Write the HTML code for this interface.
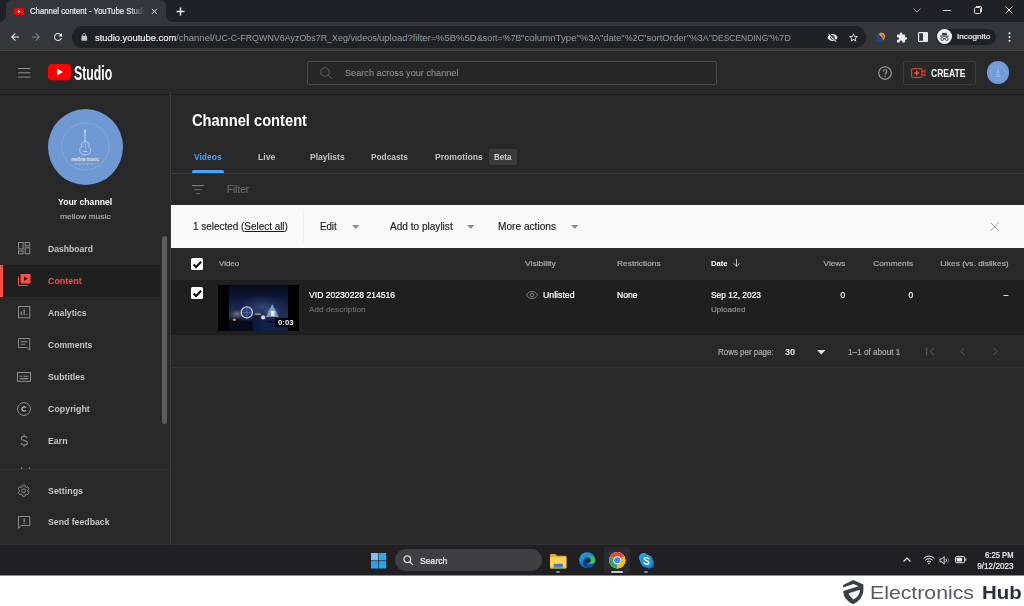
<!DOCTYPE html>
<html>
<head>
<meta charset="utf-8">
<title>Channel content - YouTube Studio</title>
<style>
*{box-sizing:border-box;margin:0;padding:0}
html,body{width:1024px;height:606px;overflow:hidden;background:#fff;font-family:"Liberation Sans",sans-serif;}
#root{position:relative;width:1024px;height:606px;overflow:hidden;background:#fff}
.a{position:absolute}
.t{position:absolute;white-space:nowrap;line-height:1;display:inline-block}
svg{position:absolute;overflow:visible}
/* chrome */
#tabstrip{left:0;top:0;width:1024px;height:23px;background:#202124}
#tab{left:6px;top:0;width:160px;height:23px;background:#35363a;border-radius:6px 6px 0 0}
#tabl{left:0px;top:16px;width:6px;height:6px;background:radial-gradient(circle at 0 0,#202124 5.5px,#35363a 6px)}
#tabr{left:166px;top:16px;width:6px;height:6px;background:radial-gradient(circle at 100% 0,#202124 5.5px,#35363a 6px)}
#toolbar{left:0;top:22px;width:1024px;height:29px;background:#35363a;border-bottom:1px solid #404145}
#omni{left:72px;top:26px;width:794px;height:22px;border-radius:11px;background:#202124}
#incog{left:936px;top:28.5px;width:60px;height:16px;border-radius:8px;background:#202124}
#incogc{left:936.5px;top:29px;width:15px;height:15px;border-radius:50%;background:#f1f3f4}
/* studio */
#app{left:0;top:51px;width:1024px;height:494px;background:#282828}
#hdr{left:0;top:51px;width:1024px;height:43px;background:#282828;box-shadow:0 1px 1px rgba(0,0,0,.28)}
#sideline{left:170px;top:93px;width:1px;height:452px;background:#3a3a3c;z-index:2}
#search{left:307px;top:60.5px;width:410px;height:24px;border:1px solid #4b4b4b;border-radius:2px;background:#262626}
#create{left:903px;top:60.7px;width:72.8px;height:24px;border:1px solid #3b3b3b;border-radius:2px}
#avatar{left:986.6px;top:61.4px;width:22px;height:22.2px;border-radius:50%;background:#719cd6}
#bigav{left:48px;top:108.8px;width:75.2px;height:76px;border-radius:50%;background:#6f99d3}
#navsel{left:0;top:264.5px;width:160px;height:32px;background:#1f1f1f}
#navbar{left:0;top:264.5px;width:3px;height:32px;background:#ff4e45}
#sscroll{left:162.2px;top:235.6px;width:5.2px;height:188px;border-radius:3px;background:#5c5c5c}
#sdiv{left:0;top:469px;width:170px;height:1px;background:#333}
#tabline{left:171px;top:173px;width:853px;height:1px;background:#3a3a3a}
#tabul{left:192px;top:170px;width:32px;height:2.5px;background:#3ea6ff;border-radius:2px 2px 0 0}
#beta{left:489px;top:149px;width:27.8px;height:15.8px;background:#3a3a3a;border-radius:2px}
#selbar{left:171px;top:205.2px;width:853px;height:42.4px;background:#f9f9f9}
#seldiv{left:303px;top:211px;width:1px;height:32px;background:#efefef}
#row{left:171px;top:280px;width:853px;height:55px;background:#1f1f1f}
#hline{left:171px;top:280px;width:853px;height:1px;background:#222}
#pline{left:171px;top:367px;width:853px;height:1px;background:#343434}
.cb{width:12.3px;height:12.1px;background:#fff;border-radius:1.5px}
#thumb{left:218.4px;top:284.9px;width:80.3px;height:46.1px;background:#000;overflow:hidden}
#dur{left:275.4px;top:318px;width:19px;height:8.8px;background:rgba(0,0,0,.85);border-radius:1px}
/* taskbar */
#taskbar{left:0;top:544.3px;width:1024px;height:31.2px;background:#202023;border-top:1px solid #303034}
#tsearch{left:395.2px;top:549px;width:147.2px;height:22px;border-radius:11px;background:#3f3f42}
#tchrome{left:603.5px;top:546.5px;width:26.5px;height:26.5px;border-radius:3px;background:#2b2b2f}
.dot{height:1.6px;border-radius:1px;background:#8a8a8e}
#tbot{left:0;top:575px;width:1024px;height:1px;background:#8c8c8e}

</style>
</head>
<body>
<div id="root">
<!-- ===== Chrome browser frame ===== -->
<div class="a" id="tabstrip"></div>
<div class="a" id="tab"></div>
<div class="a" id="tabl"></div>
<div class="a" id="tabr"></div>
<div class="a" id="toolbar"></div>
<div class="a" id="omni"></div>
<!-- favicon -->
<svg style="left:14px;top:8px" width="10" height="7" viewBox="0 0 10 7"><rect width="10" height="7" rx="1.8" fill="#f00"/><path d="M4 2v3l2.6-1.5z" fill="#fff"/></svg>
<!-- tab close -->
<svg style="left:151px;top:7.800px" width="6.800" height="6.800" viewBox="0 0 8 8"><path d="M1 1l6 6M7 1l-6 6" stroke="#e8eaed" stroke-width="1.1" fill="none"/></svg>
<!-- new tab + -->
<svg style="left:175.5px;top:6.5px" width="9" height="9" viewBox="0 0 9 9"><path d="M4.5 .5v8M.5 4.5h8" stroke="#e8eaed" stroke-width="1.5" fill="none"/></svg>
<!-- window controls -->
<svg style="left:913px;top:7.5px" width="8" height="5" viewBox="0 0 8 5"><path d="M.5 .5l3.5 3.5 3.5-3.5" stroke="#9aa0a6" stroke-width="1" fill="none"/></svg>
<svg style="left:943px;top:9.5px" width="8" height="1" viewBox="0 0 8 1"><rect width="8" height="1" fill="#dadce0"/></svg>
<svg style="left:974px;top:6px" width="8" height="8" viewBox="0 0 8 8"><rect x=".5" y="1.5" width="6" height="6" rx="1.2" stroke="#dadce0" stroke-width="1" fill="none"/><path d="M2 .5h4.2a1.3 1.3 0 0 1 1.3 1.3V6" stroke="#dadce0" stroke-width="1" fill="none"/></svg>
<svg style="left:1005px;top:6px" width="8" height="8" viewBox="0 0 8 8"><path d="M.5 .5l7 7M7.5 .5l-7 7" stroke="#e8eaed" stroke-width="1" fill="none"/></svg>
<!-- nav buttons -->
<svg style="left:8.5px;top:30.5px" width="12" height="12" viewBox="0 0 24 24"><path fill="#e8eaed" d="M20 11H7.83l5.59-5.59L12 4l-8 8 8 8 1.41-1.41L7.83 13H20v-2z"/></svg>
<svg style="left:30px;top:30.5px" width="12" height="12" viewBox="0 0 24 24"><path fill="#7f8286" d="M12 4l-1.41 1.41L16.17 11H4v2h12.17l-5.58 5.59L12 20l8-8z"/></svg>
<svg style="left:51.5px;top:30.5px" width="12" height="12" viewBox="0 0 24 24"><path fill="#e8eaed" d="M17.65 6.35C16.2 4.9 14.21 4 12 4c-4.42 0-7.99 3.58-7.99 8s3.57 8 7.99 8c3.73 0 6.84-2.55 7.73-6h-2.08c-.82 2.33-3.04 4-5.65 4-3.31 0-6-2.69-6-6s2.69-6 6-6c1.66 0 3.14.69 4.22 1.78L13 11h7V4l-2.35 2.35z"/></svg>
<!-- lock -->
<svg style="left:80px;top:32.5px" width="8.5" height="8.5" viewBox="0 0 24 24"><path fill="#c4c7c9" d="M18 8h-1V6c0-2.76-2.24-5-5-5S7 3.24 7 6v2H6c-1.1 0-2 .9-2 2v10c0 1.1.9 2 2 2h12c1.1 0 2-.9 2-2V10c0-1.1-.9-2-2-2zm-2.9 0H8.900V6c0-1.710 1.390-3.100 3.100-3.100 1.710 0 3.100 1.390 3.100 3.100v2z"/></svg>
<!-- eye-slash -->
<svg style="left:826.5px;top:31.5px" width="11" height="11" viewBox="0 0 24 24"><path fill="#e8eaed" d="M12 7c2.76 0 5 2.24 5 5 0 .65-.13 1.26-.36 1.83l2.92 2.92c1.51-1.26 2.7-2.89 3.43-4.75-1.73-4.39-6-7.5-11-7.5-1.4 0-2.74.25-3.98.7l2.16 2.16C10.74 7.13 11.35 7 12 7zM2 4.27l2.28 2.28.46.46C3.080 8.300 1.780 10.020 1 12c1.730 4.390 6 7.500 11 7.500 1.550 0 3.030-.3 4.380-.84l.42.42L19.730 22 21 20.730 3.270 3 2 4.270zM7.530 9.800l1.550 1.550c-.05.21-.08.43-.08.65 0 1.660 1.340 3 3 3 .22 0 .44-.03.65-.08l1.550 1.550c-.67.33-1.410.53-2.200.53-2.760 0-5-2.240-5-5 0-.79.2-1.530.53-2.200zm4.310-.78l3.150 3.150.02-.16c0-1.660-1.340-3-3-3l-.17.010z"/></svg>
<!-- star -->
<svg style="left:847.5px;top:31.5px" width="11" height="11" viewBox="0 0 24 24"><path fill="#e8eaed" d="M22 9.240l-7.190-.62L12 2 9.190 8.630 2 9.240l5.460 4.730L5.820 21 12 17.270 18.180 21l-1.630-7.030L22 9.240zM12 15.400l-3.760 2.270 1-4.280-3.320-2.880 4.380-.38L12 6.100l1.710 4.040 4.380.38-3.320 2.880 1 4.280L12 15.400z"/></svg>
<!-- extension colored -->
<svg style="left:875px;top:32px" width="11" height="10" viewBox="0 0 11 10"><ellipse cx="4.200" cy="5.200" rx="3.800" ry="4.300" fill="#27407a"/><path d="M4.500 1.200c2.200-1.200 5.300.2 5.600 2.600.2 1.800-.8 3.600-2.200 4.600-.3-1.200-.2-2.300-1-3.300-.7-.9-1.800-1.200-2.500-2.100-.3-.5-.3-1.300.1-1.800z" fill="#e8a33a"/><path d="M6.200 2.200c1.200-.2 2.500.5 2.700 1.700.2 1-.3 2-.9 2.700-.1-1.700-.9-3.100-1.800-4.400z" fill="#d8402f"/></svg>
<!-- puzzle -->
<svg style="left:895.5px;top:31.5px" width="11.500" height="11.500" viewBox="0 0 24 24"><path fill="#e8eaed" d="M20.500 11H19V7c0-1.100-.9-2-2-2h-4V3.500C13 2.120 11.880 1 10.500 1S8 2.120 8 3.500V5H4c-1.100 0-1.990.9-1.990 2v3.800H3.500c1.490 0 2.700 1.210 2.700 2.700s-1.210 2.700-2.700 2.700H2V20c0 1.100.9 2 2 2h3.800v-1.500c0-1.490 1.210-2.700 2.700-2.700 1.490 0 2.700 1.210 2.700 2.700V22H17c1.100 0 2-.9 2-2v-4h1.500c1.380 0 2.500-1.120 2.500-2.500S21.880 11 20.500 11z"/></svg>
<!-- side panel -->
<svg style="left:918px;top:32px" width="10" height="10" viewBox="0 0 10 10"><rect x=".6" y=".6" width="8.800" height="8.800" rx=".6" stroke="#e8eaed" stroke-width="1.200" fill="none"/><rect x="5" y=".6" width="4.400" height="8.800" fill="#e8eaed"/></svg>
<!-- incognito pill -->
<div class="a" id="incog"></div>
<div class="a" id="incogc"></div>
<svg style="left:938.5px;top:31.5px" width="11" height="10" viewBox="0 0 11 10"><path d="M2.600 3.600l.8-2.600c.1-.3.4-.4.700-.3l1.400.4 1.400-.4c.3-.1.600 0 .7.300l.8 2.600z" fill="#3c4043"/><rect x=".8" y="3.700" width="9.400" height=".9" fill="#3c4043"/><circle cx="3.300" cy="7" r="1.500" stroke="#3c4043" stroke-width=".9" fill="none"/><circle cx="7.700" cy="7" r="1.500" stroke="#3c4043" stroke-width=".9" fill="none"/><path d="M4.700 6.800c.5-.3 1.100-.3 1.600 0" stroke="#3c4043" stroke-width=".8" fill="none"/></svg>
<!-- 3 dots -->
<svg style="left:1008px;top:32px" width="3" height="10" viewBox="0 0 3 10"><circle cx="1.500" cy="1.300" r="1.050" fill="#e8eaed"/><circle cx="1.500" cy="5" r="1.050" fill="#e8eaed"/><circle cx="1.500" cy="8.700" r="1.050" fill="#e8eaed"/></svg>

<!-- ===== YouTube Studio ===== -->
<div class="a" id="app"></div>
<div class="a" id="sideline"></div>
<div class="a" id="hdr"></div>
<!-- hamburger -->
<svg style="left:18px;top:67.500px" width="12.500" height="10" viewBox="0 0 12.500 10"><path d="M0 .5h12.500M0 4.800h12.500M0 9.100h12.500" stroke="#909090" stroke-width="1" fill="none"/></svg>
<!-- yt logo -->
<svg style="left:48px;top:64.300px" width="23" height="16.200" viewBox="0 0 23 16.200"><rect width="23" height="16.200" rx="4" fill="#f00"/><path d="M9 4.600v7l6.200-3.500z" fill="#fff"/></svg>
<!-- search box -->
<div class="a" id="search"></div>
<svg style="left:319.500px;top:66.800px" width="13" height="13" viewBox="0 0 13 13"><circle cx="5" cy="5" r="4.300" stroke="#5f5f5f" stroke-width="1" fill="none"/><path d="M8.100 8.100l4 4" stroke="#5f5f5f" stroke-width="1" fill="none"/></svg>
<!-- help -->
<svg style="left:878px;top:66px" width="14" height="14" viewBox="0 0 14 14"><circle cx="7" cy="7" r="6.300" stroke="#a0a0a0" stroke-width="1.150" fill="none"/><path d="M5.100 5.600c0-1.100.8-1.900 1.900-1.900s1.900.7 1.900 1.700c0 1.300-1.800 1.500-1.800 3" stroke="#a0a0a0" stroke-width="1.150" fill="none"/><circle cx="7.050" cy="10.200" r=".75" fill="#a0a0a0"/></svg>
<!-- create -->
<div class="a" id="create"></div>
<svg style="left:911px;top:68px" width="15" height="10" viewBox="0 0 15 10"><rect x=".6" y=".6" width="10.300" height="8.800" rx="1.200" stroke="#c9433a" stroke-width="1.200" fill="none"/><path d="M11 3.800l2.900-1.400v5.200L11 6.200" stroke="#c9433a" stroke-width="1.100" fill="none"/><path d="M5.750 2.600v4.800M3.300 5h4.900" stroke="#ff4e45" stroke-width="1.400" fill="none"/></svg>
<!-- avatar small -->
<div class="a" id="avatar"></div>
<svg style="left:986.500px;top:61.500px" width="22" height="22" viewBox="0 0 22 22"><circle cx="11" cy="11" r="7" stroke="#94b6e6" stroke-width=".8" fill="none" stroke-dasharray=".9 .6"/><path d="M11 6.300v3.800" stroke="#b5cdef" stroke-width=".7"/><ellipse cx="11" cy="11.600" rx="1.400" ry="1.800" stroke="#b0c9ee" stroke-width=".6" fill="none"/><rect x="8" y="14.300" width="6" height=".7" fill="#a8c4ec"/></svg>

<!-- sidebar avatar -->
<div class="a" id="bigav"></div>
<svg style="left:48px;top:109px" width="75" height="75" viewBox="0 0 75 75">
<circle cx="37.400" cy="37.400" r="23.500" stroke="#9dbbe6" stroke-width="1" fill="none" stroke-dasharray="1 .6" opacity=".8"/>
<path d="M37 21.500v11.500" stroke="#c4d7f2" stroke-width="1" fill="none"/>
<path d="M36.200 20.800h1.700v2.400h-1.700z" fill="#d9e5f7"/>
<path d="M34.600 33.200C33 34 33.200 36.500 34.300 37.600 31.500 38.500 31 42 32.500 44c1.800 2.300 7.600 2.300 9.400 0 1.500-2 1-5.500-1.800-6.400 1.100-1.100 1.300-3.600-.3-4.400-1.300-.7-3.900-.7-5.200 0z" stroke="#bdd2f0" stroke-width=".9" fill="none"/>
<path d="M35.800 35c1.300-.8 2.300.5 1.600 1.900-.5 1-.2 2.300.9 2.800" stroke="#bdd2f0" stroke-width=".7" fill="none"/>
<rect x="35" y="42.200" width="4.400" height=".9" fill="#c9daf3"/>
<text x="37.100" y="52" font-family="Liberation Sans, sans-serif" font-size="4.500" font-weight="700" fill="#e9e6d6" text-anchor="middle" textLength="27.500" lengthAdjust="spacingAndGlyphs">mellow music</text>
<text x="37" y="55.800" font-family="Liberation Sans, sans-serif" font-size="2.600" fill="#a9c3ea" text-anchor="middle" textLength="21" lengthAdjust="spacingAndGlyphs">easy on the ears</text>
</svg>

<!-- nav selected -->
<div class="a" id="navsel"></div>
<div class="a" id="navbar"></div>
<div class="a" id="sscroll"></div>
<div class="a" id="sdiv"></div>

<!-- nav icons (12x12 at x=18) -->
<!-- dashboard -->
<svg style="left:17.700px;top:241.900px" width="12.300" height="12.300" viewBox="0 0 12.500 12.500" fill="none" stroke="#909090" stroke-width="1"><rect x=".5" y=".5" width="4.700" height="6.600"/><rect x="7.300" y=".5" width="4.700" height="3.400"/><rect x=".5" y="9.100" width="4.700" height="2.900"/><rect x="7.300" y="5.900" width="4.700" height="6.100"/></svg>
<!-- content (red) -->
<svg style="left:17.500px;top:274.400px" width="12.500" height="12" viewBox="0 0 13 12.500"><path d="M.5 2.600v9.400h9.600" stroke="#ff4e45" stroke-width="1" fill="none"/><rect x="2.600" y="0" width="10.400" height="9.800" rx=".6" fill="#ff4e45"/><path d="M6.300 2.500v4.800l4-2.400z" fill="#1f1f1f"/></svg>
<!-- analytics -->
<svg style="left:17.700px;top:305.900px" width="12.300" height="12.300" viewBox="0 0 12.500 12.500" fill="none" stroke="#909090" stroke-width="1"><rect x=".5" y=".5" width="11.500" height="11.500"/><path d="M3.500 5.600v3.600M6.250 3.300v5.900M9 8.200v1" stroke-width="1.300"/></svg>
<!-- comments -->
<svg style="left:17.700px;top:337.900px" width="12.300" height="12.800" viewBox="0 0 12.500 13" fill="none" stroke="#909090" stroke-width="1"><path d="M.5 .5h11.500v12l-2.600-2.800H.5z"/><path d="M2.800 3.700h6.800M2.800 6.300h4.600"/></svg>
<!-- subtitles -->
<svg style="left:17px;top:372.300px" width="14" height="9.800" viewBox="0 0 14 9.800" fill="none" stroke="#909090" stroke-width="1"><rect x=".5" y=".5" width="13" height="8.800"/><path d="M2.800 4.300h2.200M6.200 4.300h5M2.800 6.600h8.400" stroke-width="1.100"/></svg>
<!-- copyright -->
<svg style="left:17px;top:401.800px" width="14" height="14" viewBox="0 0 14 14" fill="none" stroke="#909090" stroke-width="1"><circle cx="7" cy="7" r="6.450"/><path d="M8.700 5.700a2.100 2.100 0 1 0 0 2.600" stroke="#b8b8b8" stroke-width="1.300"/></svg>
<!-- earn -->
<svg style="left:20.200px;top:433.800px" width="8.200" height="13.400" viewBox="0 0 9 14" fill="none" stroke="#909090" stroke-width="1.100"><path d="M7.800 4.100c-.2-1.100-1.400-1.900-3.200-1.900-1.900 0-3.200.9-3.200 2.300 0 3.200 6.800 1.300 6.800 4.700 0 1.400-1.400 2.400-3.500 2.400-2 0-3.400-.9-3.600-2.200"/><path d="M4.500 0v2.200M4.500 11.700v2.300"/></svg>
<!-- customization (clipped) -->
<svg style="left:20.500px;top:467px" width="10" height="2" viewBox="0 0 10 2"><rect x="0" y=".4" width="1.300" height="1.600" fill="#8a8a8a"/><rect x="7.800" y=".4" width="1.300" height="1.600" fill="#8a8a8a"/></svg>
<!-- settings gear -->
<svg style="left:17.300px;top:483.700px" width="13.400" height="13.400" viewBox="0 0 24 24" fill="none" stroke="#909090" stroke-width="1.700"><path d="M19.430 12.980c.04-.32.07-.64.07-.98s-.03-.66-.07-.98l2.110-1.650c.19-.15.24-.42.12-.64l-2-3.460c-.12-.22-.39-.3-.61-.22l-2.490 1c-.52-.4-1.080-.73-1.690-.98l-.38-2.650C14.460 2.180 14.250 2 14 2h-4c-.25 0-.46.18-.49.42l-.38 2.650c-.61.25-1.170.59-1.690.98l-2.490-1c-.23-.09-.49 0-.61.22l-2 3.460c-.13.22-.07.49.12.640l2.110 1.650c-.04.32-.07.65-.07.980s.03.660.07.980l-2.110 1.650c-.19.15-.24.42-.12.640l2 3.460c.12.22.39.3.61.22l2.490-1c.52.4 1.080.73 1.690.98l.38 2.650c.03.24.24.42.49.42h4c.25 0 .46-.18.490-.42l.38-2.650c.61-.25 1.170-.59 1.690-.98l2.490 1c.23.09.49 0 .61-.22l2-3.460c.12-.22.07-.49-.12-.64l-2.110-1.650z"/><circle cx="12" cy="12" r="3.400"/></svg>
<!-- feedback -->
<svg style="left:17.700px;top:515.700px" width="12.300" height="12.800" viewBox="0 0 12.500 13" fill="none" stroke="#909090" stroke-width="1"><path d="M12 .5H.5v12l2.600-2.800H12z"/><path d="M6.250 2.500v3.800M6.250 7.300v1.200" stroke-width="1.300"/></svg>

<!-- ===== main content ===== -->
<div class="a" id="tabline"></div>
<div class="a" id="tabul"></div>
<div class="a" id="beta"></div>
<!-- filter icon -->
<svg style="left:191.500px;top:184.500px" width="12" height="9" viewBox="0 0 12 9"><path d="M0 .6h12" stroke="#757575" stroke-width="1.300" fill="none"/><path d="M2.200 4.700h7.600M4.300 8.600h3.400" stroke="#717171" stroke-width="1" fill="none"/></svg>
<!-- selection bar -->
<div class="a" id="selbar"></div>
<div class="a" id="seldiv"></div>
<svg style="left:351.500px;top:224.500px" width="7.500" height="4" viewBox="0 0 7.500 4"><path d="M0 0h7.500L3.750 4z" fill="#8e8e8e"/></svg>
<svg style="left:467.300px;top:224.500px" width="7.500" height="4" viewBox="0 0 7.500 4"><path d="M0 0h7.500L3.750 4z" fill="#8e8e8e"/></svg>
<svg style="left:571.200px;top:224.500px" width="7.500" height="4" viewBox="0 0 7.500 4"><path d="M0 0h7.500L3.750 4z" fill="#8e8e8e"/></svg>
<svg style="left:990px;top:222px" width="9.500" height="9.500" viewBox="0 0 9.500 9.500"><path d="M.5 .5l8.500 8.500M9 .5L.5 9" stroke="#9c9c9c" stroke-width="1" fill="none"/></svg>
<!-- table -->
<div class="a" id="row"></div>
<div class="a" id="pline"></div>
<div class="a cb" style="left:191px;top:257.700px"></div>
<svg style="left:191px;top:257.700px" width="12.500" height="12.500" viewBox="0 0 12.500 12.500"><path d="M2.600 6.500l2.500 2.500 5-5.300" stroke="#0a0a0a" stroke-width="2" fill="none"/></svg>
<div class="a cb" style="left:191px;top:287px"></div>
<svg style="left:191px;top:287px" width="12.500" height="12.500" viewBox="0 0 12.500 12.500"><path d="M2.600 6.500l2.500 2.500 5-5.300" stroke="#0a0a0a" stroke-width="2" fill="none"/></svg>
<!-- thumbnail -->
<div class="a" id="thumb">
<svg style="left:10.800px;top:0" width="59" height="46" viewBox="0 0 59 46">
<defs>
<linearGradient id="sky" x1="0" y1="0" x2="0" y2="1"><stop offset="0" stop-color="#070b1d"/><stop offset=".25" stop-color="#0c1534"/><stop offset=".5" stop-color="#18274e"/><stop offset=".68" stop-color="#22335a"/><stop offset=".8" stop-color="#0d1630"/><stop offset="1" stop-color="#070b1a"/></linearGradient>
<radialGradient id="gl1" cx=".5" cy=".5" r=".5"><stop offset="0" stop-color="#dfe8fb" stop-opacity=".95"/><stop offset=".5" stop-color="#8fa6d6" stop-opacity=".5"/><stop offset="1" stop-color="#3a5aa0" stop-opacity="0"/></radialGradient>
<radialGradient id="gl2" cx=".5" cy=".5" r=".5"><stop offset="0" stop-color="#3a5288" stop-opacity=".8"/><stop offset="1" stop-color="#1a2b55" stop-opacity="0"/></radialGradient>
<radialGradient id="sm" cx=".5" cy=".5" r=".5"><stop offset="0" stop-color="#8a8c90" stop-opacity=".8"/><stop offset="1" stop-color="#55585e" stop-opacity="0"/></radialGradient>
</defs>
<rect width="59" height="46" fill="url(#sky)"/>
<ellipse cx="33" cy="22" rx="26" ry="13" fill="url(#gl2)"/>
<ellipse cx="8" cy="29" rx="8" ry="5" fill="url(#sm)"/>
<ellipse cx="43" cy="27" rx="9" ry="6" fill="url(#gl1)" opacity=".55"/>
<circle cx="17.800" cy="27.400" r="5.600" stroke="#c9ccd2" stroke-width="1.300" fill="#2a4b8c" fill-opacity=".55"/>
<path d="M17.800 22v10.800M12.400 27.400h10.800" stroke="#7fa0d8" stroke-width=".6" opacity=".7"/>
<rect x="26" y="28.400" width="6" height="1.300" fill="#c69a5c"/>
<path d="M37 32l4.500-9.500 1.800-3 1.500 3L50 32z" fill="#9fb0cf" opacity=".75"/>
<path d="M42 22.500l1.300-3.200 1.400 3.200" fill="#6da8ff"/>
<rect x="42" y="26" width="3.500" height="5" fill="#eef2fb" opacity=".9"/>
<circle cx="34.200" cy="32.400" r="1.900" fill="#fff" opacity=".95"/>
<circle cx="34.200" cy="32.400" r="3.600" fill="url(#gl1)" opacity=".6"/>
<path d="M0 35l6-1.500 5 1.800 9 .7 4-2.200 3 1.200 4 2 8-1 8 1.200 12-.8V46H0z" fill="#080c1a" opacity=".92"/>
<rect x="24" y="31" width="7" height="15" fill="#0e1a3c"/>
<path d="M31 37l5-1 6 2 7-1.200 10 1V46H31z" fill="#14254f" opacity=".8"/>
<circle cx="5.500" cy="34.700" r="1.300" fill="#f0a038"/>
<circle cx="4.200" cy="34.700" r=".8" fill="#e05a2a"/>
</svg>
</div>
<div class="a" id="dur"></div>
<!-- eye (outline) -->
<svg style="left:525.500px;top:291px" width="12" height="8" viewBox="0 0 12 8" fill="none" stroke="#8a8a8a" stroke-width=".9"><path d="M.5 4C1.800 1.700 3.700 .5 6 .5S10.200 1.700 11.500 4C10.200 6.300 8.300 7.500 6 7.500S1.800 6.300 .5 4z"/><circle cx="6" cy="4" r="1.800"/></svg>
<!-- sort arrow -->
<svg style="left:732.500px;top:259px" width="7" height="8" viewBox="0 0 7 8" fill="none" stroke="#d0d0d0" stroke-width=".9"><path d="M3.500 0v7.300M.5 4.300l3 3 3-3"/></svg>
<!-- pagination -->
<svg style="left:816.500px;top:349.500px" width="8.500" height="4.500" viewBox="0 0 8.500 4.500"><path d="M0 0h8.500L4.250 4.500z" fill="#e0e0e0"/></svg>
<svg style="left:926px;top:347px" width="9" height="9" viewBox="0 0 9 9" fill="none" stroke="#5e5e5e" stroke-width="1"><path d="M.7 .5v8M8 .8L4.200 4.500 8 8.200"/></svg>
<svg style="left:959.500px;top:347px" width="5" height="9" viewBox="0 0 5 9" fill="none" stroke="#5e5e5e" stroke-width="1"><path d="M4.500 .8L.8 4.500l3.700 3.700"/></svg>
<svg style="left:992.500px;top:347px" width="5" height="9" viewBox="0 0 5 9" fill="none" stroke="#5e5e5e" stroke-width="1"><path d="M.5 .8l3.700 3.700L.5 8.200"/></svg>

<!-- ===== Windows taskbar ===== -->
<div class="a" id="taskbar"></div>
<div class="a" id="tbot"></div>
<!-- windows logo -->
<svg style="left:371px;top:552.900px" width="15.200" height="15.500" viewBox="0 0 15.200 15.500"><rect x="0" y="0" width="7.300" height="7.400" fill="#7cc3f3"/><rect x="7.900" y="0" width="7.300" height="7.400" fill="#2aaaf3"/><rect x="0" y="8.100" width="7.300" height="7.400" fill="#20a6f2"/><rect x="7.900" y="8.100" width="7.300" height="7.400" fill="#22a4f0"/></svg>
<div class="a" id="tsearch"></div>
<svg style="left:402.800px;top:554.800px" width="10.400" height="10.400" viewBox="0 0 10.500 10.500" fill="none" stroke="#dcdcdc" stroke-width="1.300"><circle cx="4.300" cy="4.300" r="3.400"/><path d="M6.800 6.800l3.200 3.200"/></svg>
<!-- folder -->
<svg style="left:550px;top:553.500px" width="16.500" height="14.500" viewBox="0 0 16.500 14.500"><path d="M0 1.300C0 .6.600 0 1.300 0h4l1.700 1.800h8.200c.7 0 1.300.6 1.300 1.300v2H0z" fill="#e9a825"/><rect x="0" y="3.300" width="16.500" height="11.200" rx="1.200" fill="#fcd259"/><rect x="3.800" y="9.800" width="9" height="4.700" fill="#2f7fd6"/><rect x="0" y="12.800" width="16.500" height="1.700" rx=".8" fill="#e9a825" opacity=".55"/></svg>
<div class="a dot" style="left:555.500px;top:571px;width:4px"></div>
<!-- edge -->
<svg style="left:579px;top:552px" width="16.500" height="16.500" viewBox="0 0 16.500 16.500"><defs><linearGradient id="eg1" x1="0" y1="0" x2=".6" y2="1"><stop offset="0" stop-color="#2fa8ea"/><stop offset=".55" stop-color="#1a7fd0"/><stop offset="1" stop-color="#0b4f9c"/></linearGradient><linearGradient id="eg2" x1="0" y1="0" x2="1" y2="1"><stop offset="0" stop-color="#2db06a"/><stop offset="1" stop-color="#54c24a"/></linearGradient></defs><circle cx="8.250" cy="8.250" r="8.100" fill="url(#eg1)"/><path d="M8.600 3.800c3.200-1.200 6.800.3 7.600 3.200.6 2.400-.9 4.600-3.300 4.900-1.500.2-2.800-.4-3.100-1.400 1.300-.3 2.100-1.400 1.900-2.700-.3-1.700-1.500-3-3.100-4z" fill="url(#eg2)"/><path d="M6.200 6.300c1.400-1 3.300-1 4.500 0 1.100 1 1.300 2.700.4 3.800-.7.800-1.800 1-2.700.6-1.500 1.700.3 4.300 3.300 4.300-2.900 1.300-6.600-.1-7.500-3.100-.6-2.100.3-4.400 2-5.600z" fill="#0d3f80"/><circle cx="8.900" cy="8.500" r="1.900" fill="#1b1f2a"/></svg>
<!-- chrome (active) -->
<div class="a" id="tchrome"></div>
<svg style="left:608.500px;top:552px" width="16.500" height="16.500" viewBox="0 0 16.500 16.500"><circle cx="8.250" cy="8.250" r="8.200" fill="#fff"/><path d="M8.250 8.250L1.150 4.150A8.200 8.200 0 0 1 15.350 4.150z" fill="#ea4335"/><path d="M8.250 8.250L15.350 4.150A8.200 8.200 0 0 1 8.250 16.450z" fill="#fbbc04"/><path d="M8.250 8.250L8.250 16.450A8.200 8.200 0 0 1 1.150 4.150z" fill="#34a853"/><circle cx="8.250" cy="8.250" r="3.900" fill="#fff"/><circle cx="8.250" cy="8.250" r="3.100" fill="#4285f4"/></svg>
<div class="a dot" style="left:610.500px;top:570.800px;width:12px;background:#c9c9cc;height:2px"></div>
<!-- skype -->
<svg style="left:638.500px;top:552.500px" width="15" height="15.500" viewBox="0 0 15 15.500"><circle cx="4.800" cy="4.800" r="4.800" fill="#28a8ea"/><circle cx="10.200" cy="10.700" r="4.800" fill="#0f78d4"/><circle cx="7.500" cy="7.750" r="6.300" fill="#1b94e4"/><path d="M9.600 5.900c-.3-.9-1.100-1.400-2.200-1.400-1.200 0-2.100.6-2.100 1.600 0 2.200 4.500 1 4.500 3.300 0 1-1 1.700-2.300 1.700-1.200 0-2.100-.6-2.400-1.500" stroke="#fff" stroke-width="1.300" fill="none" stroke-linecap="round"/></svg>
<div class="a dot" style="left:644px;top:571px;width:4px"></div>
<!-- tray -->
<svg style="left:903.300px;top:556.900px" width="8" height="5" viewBox="0 0 8 5" fill="none" stroke="#f0f0f0" stroke-width="1.100"><path d="M.5 4.500L4 1l3.500 3.500"/></svg>
<svg style="left:922.500px;top:555px" width="12" height="9.500" viewBox="0 0 12 9.500" fill="none" stroke="#f0f0f0" stroke-width="1"><path d="M.6 3.400a7.600 7.600 0 0 1 10.800 0"/><path d="M2.300 5.200a5.200 5.200 0 0 1 7.400 0"/><path d="M4 7a2.800 2.800 0 0 1 4 0"/><circle cx="6" cy="8.500" r=".8" fill="#f0f0f0" stroke="none"/></svg>
<svg style="left:939px;top:555.800px" width="11" height="8.800" viewBox="0 0 11.500 10" fill="none" stroke="#f0f0f0" stroke-width="1"><path d="M.6 3.400h2l2.800-2.600v8.400L2.600 6.600h-2z"/><path d="M7.200 3.300a2.400 2.400 0 0 1 0 3.400"/><path d="M9 1.700a4.700 4.700 0 0 1 0 6.600" opacity=".45"/></svg>
<svg style="left:955px;top:556.400px" width="11.500" height="7.200" viewBox="0 0 12 7.500"><rect x=".5" y=".5" width="9.600" height="6.500" rx="1.400" stroke="#f0f0f0" stroke-width="1" fill="none"/><rect x="1.800" y="1.800" width="5.600" height="3.900" rx=".5" fill="#f0f0f0"/><path d="M11.200 2.600v2.300" stroke="#f0f0f0" stroke-width="1"/></svg>

<!-- ===== Electronics Hub logo ===== -->
<svg style="left:843px;top:580.200px" width="20.500" height="24.300" viewBox="0 0 20.500 24.300"><path d="M10.250 0L20.400 4.600V9.800C20.200 16.500 16 21.500 10.250 24.300 4.500 21.500.5 17 .4 11.900L.1 5.100z" fill="#3a3d45"/><path d="M-.5 7.700L10.400 3.900l5.200 2.300L-.5 11.200z" fill="#fff"/><path d="M5.560 13.350L17 9.850c0 4.150-2.500 7.650-6.500 9.650-2.500-1.700-4.200-3.700-4.940-6.150z" fill="#f4f4f4"/></svg>

<span class="t" id="t0" style="-webkit-text-stroke:0.22px;left:29.50px;transform-origin:0 50%;top:7.20px;font-size:9px;font-weight:400;color:#e8eaed;transform:scaleX(0.8652);max-width:none;-webkit-mask-image:linear-gradient(90deg,#000 88%,transparent 100%);">Channel content - YouTube Studi</span>
<span class="t" id="t1" style="-webkit-text-stroke:0.22px;left:94.90px;transform-origin:0 50%;top:32.56px;font-size:9.5px;font-weight:400;color:#e8eaed;transform:scaleX(0.9855);">studio.youtube.com</span>
<span class="t" id="t2" style="-webkit-text-stroke:0.05px;left:176.10px;transform-origin:0 50%;top:32.56px;font-size:9.5px;font-weight:400;color:#92979d;transform:scaleX(1.0036);">/channel/</span>
<span class="t" id="t3" style="-webkit-text-stroke:0.05px;left:214.80px;transform-origin:0 50%;top:32.56px;font-size:9.5px;font-weight:400;color:#92979d;transform:scaleX(0.9370);">UC-C-FRQWNV6AyzObs7R_Xeg</span>
<span class="t" id="t4" style="-webkit-text-stroke:0.05px;left:347.70px;transform-origin:0 50%;top:32.56px;font-size:9.5px;font-weight:400;color:#92979d;transform:scaleX(0.9557);">/videos/</span>
<span class="t" id="t5" style="-webkit-text-stroke:0.05px;left:379.00px;transform-origin:0 50%;top:32.56px;font-size:9.5px;font-weight:400;color:#92979d;transform:scaleX(0.9996);">upload?</span>
<span class="t" id="t6" style="-webkit-text-stroke:0.05px;left:412.80px;transform-origin:0 50%;top:32.56px;font-size:9.5px;font-weight:400;color:#92979d;transform:scaleX(1.0000);">filter=</span>
<span class="t" id="t7" style="-webkit-text-stroke:0.05px;left:436.30px;transform-origin:0 50%;top:32.56px;font-size:9.5px;font-weight:400;color:#92979d;transform:scaleX(0.9982);">%5B%5D</span>
<span class="t" id="t8" style="-webkit-text-stroke:0.05px;left:476.90px;transform-origin:0 50%;top:32.56px;font-size:9.5px;font-weight:400;color:#92979d;transform:scaleX(0.9266);">&amp;sort=</span>
<span class="t" id="t9" style="-webkit-text-stroke:0.05px;left:502.60px;transform-origin:0 50%;top:32.56px;font-size:9.5px;font-weight:400;color:#92979d;transform:scaleX(0.9114);">%7B</span>
<span class="t" id="t10" style="-webkit-text-stroke:0.05px;left:520.90px;transform-origin:0 50%;top:32.56px;font-size:9.5px;font-weight:400;color:#92979d;transform:scaleX(1.0178);">"columnType"</span>
<span class="t" id="t11" style="-webkit-text-stroke:0.05px;left:579.90px;transform-origin:0 50%;top:32.56px;font-size:9.5px;font-weight:400;color:#92979d;transform:scaleX(1.0011);">%3A</span>
<span class="t" id="t12" style="-webkit-text-stroke:0.05px;left:600.00px;transform-origin:0 50%;top:32.56px;font-size:9.5px;font-weight:400;color:#92979d;transform:scaleX(0.9749);">"date"</span>
<span class="t" id="t13" style="-webkit-text-stroke:0.05px;left:624.60px;transform-origin:0 50%;top:32.56px;font-size:9.5px;font-weight:400;color:#92979d;transform:scaleX(0.9032);">%2C</span>
<span class="t" id="t14" style="-webkit-text-stroke:0.05px;left:643.20px;transform-origin:0 50%;top:32.56px;font-size:9.5px;font-weight:400;color:#92979d;transform:scaleX(1.0069);">"sortOrder"</span>
<span class="t" id="t15" style="-webkit-text-stroke:0.05px;left:690.40px;transform-origin:0 50%;top:32.56px;font-size:9.5px;font-weight:400;color:#92979d;transform:scaleX(0.9264);">%3A</span>
<span class="t" id="t16" style="-webkit-text-stroke:0.05px;left:709.00px;transform-origin:0 50%;top:32.56px;font-size:9.5px;font-weight:400;color:#92979d;transform:scaleX(0.8874);">"DESCENDING"</span>
<span class="t" id="t17" style="-webkit-text-stroke:0.05px;left:771.20px;transform-origin:0 50%;top:32.56px;font-size:9.5px;font-weight:400;color:#92979d;transform:scaleX(0.9566);">%7D</span>
<span class="t" id="t18" style="-webkit-text-stroke:0.22px;left:956.70px;transform-origin:0 50%;top:33.09px;font-size:7.8px;font-weight:400;color:#e8eaed;transform:scaleX(1.0551);">Incognito</span>
<span class="t" id="t19" style="left:74.30px;transform-origin:0 50%;top:62.59px;font-size:20.5px;font-weight:700;color:#fff;transform:scaleX(0.5991);">Studio</span>
<span class="t" id="t20" style="-webkit-text-stroke:0.1px;left:345.00px;transform-origin:0 50%;top:68.21px;font-size:9.4px;font-weight:400;color:#8e8e8e;transform:scaleX(0.9766);">Search across your channel</span>
<span class="t" id="t21" style="left:930.60px;transform-origin:0 50%;top:68.61px;font-size:10px;font-weight:700;color:#fff;transform:scaleX(0.8545);">CREATE</span>
<span class="t" id="t22" style="left:57.80px;transform-origin:0 50%;top:198.36px;font-size:9.3px;font-weight:700;color:#fff;transform:scaleX(0.9312);">Your channel</span>
<span class="t" id="t23" style="-webkit-text-stroke:0.22px;left:59.60px;transform-origin:0 50%;top:212.54px;font-size:7.9px;font-weight:400;color:#aaa;transform:scaleX(1.0684);">mellow music</span>
<span class="t" id="t24" style="left:48.00px;transform-origin:0 50%;top:244.56px;font-size:9.3px;font-weight:700;color:#c6c6c6;transform:scaleX(0.9246);">Dashboard</span>
<span class="t" id="t25" style="left:48.00px;transform-origin:0 50%;top:276.56px;font-size:9.3px;font-weight:700;color:#ff4e45;transform:scaleX(0.9566);">Content</span>
<span class="t" id="t26" style="left:48.00px;transform-origin:0 50%;top:308.56px;font-size:9.3px;font-weight:700;color:#c6c6c6;transform:scaleX(0.9336);">Analytics</span>
<span class="t" id="t27" style="left:48.00px;transform-origin:0 50%;top:340.56px;font-size:9.3px;font-weight:700;color:#c6c6c6;transform:scaleX(0.9241);">Comments</span>
<span class="t" id="t28" style="left:48.00px;transform-origin:0 50%;top:372.56px;font-size:9.3px;font-weight:700;color:#c6c6c6;transform:scaleX(0.9423);">Subtitles</span>
<span class="t" id="t29" style="left:48.00px;transform-origin:0 50%;top:404.56px;font-size:9.3px;font-weight:700;color:#c6c6c6;transform:scaleX(0.9520);">Copyright</span>
<span class="t" id="t30" style="left:48.00px;transform-origin:0 50%;top:436.56px;font-size:9.3px;font-weight:700;color:#c6c6c6;transform:scaleX(0.9433);">Earn</span>
<span class="t" id="t31" style="left:48.00px;transform-origin:0 50%;top:486.86px;font-size:9.3px;font-weight:700;color:#c6c6c6;transform:scaleX(0.9540);">Settings</span>
<span class="t" id="t32" style="left:48.00px;transform-origin:0 50%;top:518.46px;font-size:9.3px;font-weight:700;color:#c6c6c6;transform:scaleX(0.9371);">Send feedback</span>
<span class="t" id="t33" style="left:192.20px;transform-origin:0 50%;top:112.19px;font-size:16.2px;font-weight:700;color:#fff;transform:scaleX(0.9069);">Channel content</span>
<span class="t" id="t34" style="left:194.20px;transform-origin:0 50%;top:152.31px;font-size:9.4px;font-weight:700;color:#3ea6ff;transform:scaleX(0.9059);">Videos</span>
<span class="t" id="t35" style="left:258.10px;transform-origin:0 50%;top:152.31px;font-size:9.4px;font-weight:700;color:#c4c4c4;transform:scaleX(0.9166);">Live</span>
<span class="t" id="t36" style="left:309.60px;transform-origin:0 50%;top:152.31px;font-size:9.4px;font-weight:700;color:#c4c4c4;transform:scaleX(0.9120);">Playlists</span>
<span class="t" id="t37" style="left:371.20px;transform-origin:0 50%;top:152.31px;font-size:9.4px;font-weight:700;color:#c4c4c4;transform:scaleX(0.8852);">Podcasts</span>
<span class="t" id="t38" style="left:435.00px;transform-origin:0 50%;top:152.31px;font-size:9.4px;font-weight:700;color:#c4c4c4;transform:scaleX(0.9195);">Promotions</span>
<span class="t" id="t39" style="left:494.10px;transform-origin:0 50%;top:153.89px;font-size:8.2px;font-weight:700;color:#cdcdcd;transform:scaleX(0.9803);">Beta</span>
<span class="t" id="t40" style="-webkit-text-stroke:0.1px;left:226.80px;transform-origin:0 50%;top:184.92px;font-size:10.2px;font-weight:400;color:#6c6c6c;transform:scaleX(0.9717);">Filter</span>
<span class="t" id="t41" style="-webkit-text-stroke:0.15px;left:192.70px;transform-origin:0 50%;top:221.87px;font-size:10.1px;font-weight:400;color:#1a1a1a;transform:scaleX(0.9831);">1 selected (<span style="text-decoration:underline">Select all</span>)</span>
<span class="t" id="t42" style="-webkit-text-stroke:0.15px;left:320.00px;transform-origin:0 50%;top:221.87px;font-size:10.1px;font-weight:400;color:#1a1a1a;transform:scaleX(0.9594);">Edit</span>
<span class="t" id="t43" style="-webkit-text-stroke:0.15px;left:390.00px;transform-origin:0 50%;top:221.87px;font-size:10.1px;font-weight:400;color:#1a1a1a;transform:scaleX(0.9977);">Add to playlist</span>
<span class="t" id="t44" style="-webkit-text-stroke:0.15px;left:498.40px;transform-origin:0 50%;top:221.87px;font-size:10.1px;font-weight:400;color:#1a1a1a;transform:scaleX(1.0035);">More actions</span>
<span class="t" id="t45" style="-webkit-text-stroke:0.22px;left:219.10px;transform-origin:0 50%;top:259.54px;font-size:8.1px;font-weight:400;color:#aaaaaa;transform:scaleX(0.9824);">Video</span>
<span class="t" id="t46" style="-webkit-text-stroke:0.22px;left:524.90px;transform-origin:0 50%;top:259.54px;font-size:8.1px;font-weight:400;color:#aaaaaa;transform:scaleX(1.0552);">Visibility</span>
<span class="t" id="t47" style="-webkit-text-stroke:0.22px;left:616.70px;transform-origin:0 50%;top:259.54px;font-size:8.1px;font-weight:400;color:#aaaaaa;transform:scaleX(1.0336);">Restrictions</span>
<span class="t" id="t48" style="left:711.20px;transform-origin:0 50%;top:259.54px;font-size:8.1px;font-weight:700;color:#fff;transform:scaleX(0.9460);">Date</span>
<span class="t" id="t49" style="-webkit-text-stroke:0.22px;right:178.40px;transform-origin:100% 50%;top:259.54px;font-size:8.1px;font-weight:400;color:#aaaaaa;transform:scaleX(1.0208);">Views</span>
<span class="t" id="t50" style="-webkit-text-stroke:0.22px;right:110.40px;transform-origin:100% 50%;top:259.54px;font-size:8.1px;font-weight:400;color:#aaaaaa;transform:scaleX(1.0194);">Comments</span>
<span class="t" id="t51" style="-webkit-text-stroke:0.22px;right:15.50px;transform-origin:100% 50%;top:259.54px;font-size:8.1px;font-weight:400;color:#aaaaaa;transform:scaleX(1.0431);">Likes (vs. dislikes)</span>
<span class="t" id="t52" style="-webkit-text-stroke:0.22px;left:309.40px;transform-origin:0 50%;top:291.46px;font-size:9.3px;font-weight:400;color:#fff;transform:scaleX(0.9252);">VID 20230228 214516</span>
<span class="t" id="t53" style="-webkit-text-stroke:0.22px;left:309.40px;transform-origin:0 50%;top:305.84px;font-size:8.1px;font-weight:400;color:#676767;transform:scaleX(1.0162);">Add description</span>
<span class="t" id="t54" style="-webkit-text-stroke:0.22px;left:543.40px;transform-origin:0 50%;top:291.46px;font-size:9.3px;font-weight:400;color:#fff;transform:scaleX(0.9377);">Unlisted</span>
<span class="t" id="t55" style="-webkit-text-stroke:0.22px;left:616.70px;transform-origin:0 50%;top:291.46px;font-size:9.3px;font-weight:400;color:#fff;transform:scaleX(0.9265);">None</span>
<span class="t" id="t56" style="-webkit-text-stroke:0.22px;left:711.20px;transform-origin:0 50%;top:291.46px;font-size:9.3px;font-weight:400;color:#fff;transform:scaleX(0.9037);">Sep 12, 2023</span>
<span class="t" id="t57" style="-webkit-text-stroke:0.22px;left:711.20px;transform-origin:0 50%;top:305.84px;font-size:8.1px;font-weight:400;color:#8c8c8c;transform:scaleX(0.9926);">Uploaded</span>
<span class="t" id="t58" style="-webkit-text-stroke:0.22px;right:178.40px;transform-origin:100% 50%;top:291.46px;font-size:9.3px;font-weight:400;color:#fff;transform:scaleX(0.8894);">0</span>
<span class="t" id="t59" style="-webkit-text-stroke:0.22px;right:110.40px;transform-origin:100% 50%;top:291.46px;font-size:9.3px;font-weight:400;color:#fff;transform:scaleX(0.8894);">0</span>
<span class="t" id="t60" style="-webkit-text-stroke:0.22px;right:16.20px;transform-origin:100% 50%;top:291.46px;font-size:9.3px;font-weight:400;color:#fff;transform:scaleX(0.8508);">&ndash;</span>
<span class="t" id="t61" style="left:277.50px;transform-origin:0 50%;top:318.69px;font-size:8px;font-weight:700;color:#fff;transform:scaleX(0.9678);">0:03</span>
<span class="t" id="t62" style="-webkit-text-stroke:0.22px;left:718.40px;transform-origin:0 50%;top:347.85px;font-size:8.7px;font-weight:400;color:#aaaaaa;transform:scaleX(0.9136);">Rows per page:</span>
<span class="t" id="t63" style="left:784.80px;transform-origin:0 50%;top:347.66px;font-size:9.3px;font-weight:700;color:#e8e8e8;transform:scaleX(0.9861);">30</span>
<span class="t" id="t64" style="-webkit-text-stroke:0.22px;left:848.10px;transform-origin:0 50%;top:347.85px;font-size:8.7px;font-weight:400;color:#aaaaaa;transform:scaleX(0.9413);">1&ndash;1 of about 1</span>
<span class="t" id="t65" style="-webkit-text-stroke:0.22px;left:419.80px;transform-origin:0 50%;top:556.70px;font-size:9px;font-weight:400;color:#f2f2f2;transform:scaleX(0.9604);">Search</span>
<span class="t" id="t66" style="-webkit-text-stroke:0.22px;right:10.70px;transform-origin:100% 50%;top:551.59px;font-size:8.2px;font-weight:400;color:#f2f2f2;transform:scaleX(0.9311);">6:25 PM</span>
<span class="t" id="t67" style="-webkit-text-stroke:0.22px;right:10.70px;transform-origin:100% 50%;top:562.59px;font-size:8.2px;font-weight:400;color:#f2f2f2;transform:scaleX(0.9907);">9/12/2023</span>
<span class="t" id="t68" style="left:870.00px;transform-origin:0 50%;top:584.01px;font-size:18.2px;font-weight:400;color:#565960;transform:scaleX(1.1692);">Electronics</span>
<span class="t" id="t69" style="left:981.60px;transform-origin:0 50%;top:584.01px;font-size:18.2px;font-weight:700;color:#2b3040;transform:scaleX(1.1199);">Hub</span>
</div>
</body>
</html>
